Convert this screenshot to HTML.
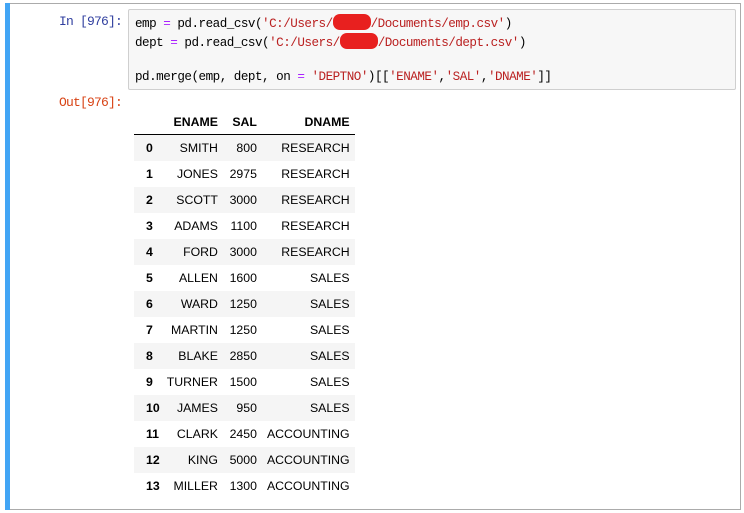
<!DOCTYPE html>
<html><head><style>
body{margin:0;width:744px;height:513px;background:#fff;position:relative;overflow:hidden;font-family:"Liberation Sans",sans-serif}
.outer{position:absolute;left:5px;top:3px;width:735px;height:505px;border:1px solid #ababab;border-left:none}
.bar{position:absolute;left:5px;top:3px;width:5px;height:507px;background:#42a5f5}
.code{position:absolute;left:128px;top:9px;width:606px;height:79px;background:#f7f7f7;border:1px solid #cfcfcf;border-radius:2px}
pre{margin:0;position:absolute;left:6px;top:4px;font-family:"Liberation Mono",monospace;font-size:12.6px;line-height:17px;color:#000;letter-spacing:-0.5px}
.s{color:#ba2121}.o{color:#aa22ff}
.red{display:inline-block;width:38px;height:16px;background:#e8201f;border-radius:7px;vertical-align:-3px}
.p{position:absolute;font-family:"Liberation Mono",monospace;font-size:13px;text-align:right;width:118px;left:4px;letter-spacing:-0.8px}
table{position:absolute;left:134px;top:109px;border-collapse:collapse;font-size:12.3px;color:#000}
th,td{height:26px;padding:0 5px;text-align:right;white-space:nowrap}
th{font-weight:bold}
thead th{height:25px;border-bottom:1px solid #000}
tbody tr:nth-child(odd){background:#f5f5f5}
tbody th{text-align:left;padding-left:12px;padding-right:2px}
</style></head><body>
<div class="outer"></div><div class="bar"></div>
<div class="p" style="top:14px;color:#303f9f">In [976]:</div>
<div class="p" style="top:95px;color:#d84315">Out[976]:</div>
<div class="code"><pre>emp <span class="o">=</span> pd.read_csv(<span class="s">'C:/Users/<span class="red"></span>/Documents/emp.csv'</span>)
dept <span class="o">=</span> pd.read_csv(<span class="s">'C:/Users/<span class="red"></span>/Documents/dept.csv'</span>)

pd.merge(emp, dept, on <span class="o">=</span> <span class="s">'DEPTNO'</span>)[[<span class="s">'ENAME'</span>,<span class="s">'SAL'</span>,<span class="s">'DNAME'</span>]]</pre></div>
<table>
<thead><tr><th style="width:16px;padding-right:2px"></th><th style="width:46px">ENAME</th><th style="width:29px">SAL</th><th style="width:80px">DNAME</th></tr></thead>
<tbody>
<tr><th>0</th><td>SMITH</td><td>800</td><td>RESEARCH</td></tr>
<tr><th>1</th><td>JONES</td><td>2975</td><td>RESEARCH</td></tr>
<tr><th>2</th><td>SCOTT</td><td>3000</td><td>RESEARCH</td></tr>
<tr><th>3</th><td>ADAMS</td><td>1100</td><td>RESEARCH</td></tr>
<tr><th>4</th><td>FORD</td><td>3000</td><td>RESEARCH</td></tr>
<tr><th>5</th><td>ALLEN</td><td>1600</td><td>SALES</td></tr>
<tr><th>6</th><td>WARD</td><td>1250</td><td>SALES</td></tr>
<tr><th>7</th><td>MARTIN</td><td>1250</td><td>SALES</td></tr>
<tr><th>8</th><td>BLAKE</td><td>2850</td><td>SALES</td></tr>
<tr><th>9</th><td>TURNER</td><td>1500</td><td>SALES</td></tr>
<tr><th>10</th><td>JAMES</td><td>950</td><td>SALES</td></tr>
<tr><th>11</th><td>CLARK</td><td>2450</td><td>ACCOUNTING</td></tr>
<tr><th>12</th><td>KING</td><td>5000</td><td>ACCOUNTING</td></tr>
<tr><th>13</th><td>MILLER</td><td>1300</td><td>ACCOUNTING</td></tr>
</tbody></table>
</body></html>
